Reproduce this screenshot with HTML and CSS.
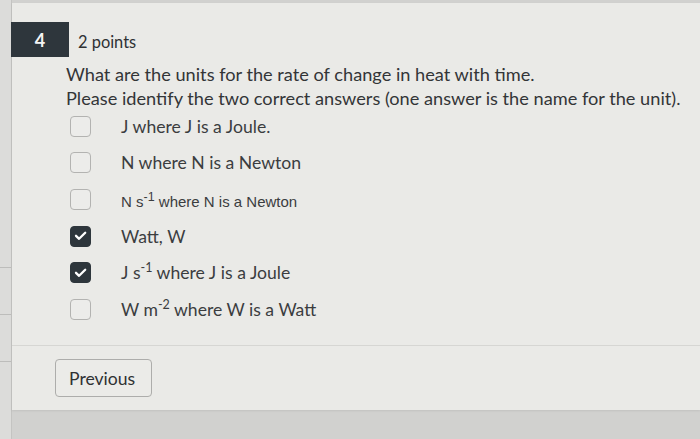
FILE: index.html
```html
<!DOCTYPE html>
<html>
<head>
<meta charset="utf-8">
<link rel="stylesheet" href="styles.css">
</head>
<body>
<div class="page">
  <aside class="side">
    <div class="side-gap"></div>
    <div class="side-row"></div>
    <div class="side-row"></div>
    <div class="side-row"></div>
  </aside>
  <main class="card">
    <section class="question">
      <header class="qhead">
        <div class="badge">4</div>
        <div class="points">2 points</div>
      </header>
      <div class="prompt">
        <p>What are the units for the rate of change in heat with time.</p>
        <p>Please identify the two correct answers (one answer is the name for the unit).</p>
      </div>
      <ul class="options">
        <li class="opt"><span class="box"></span><span class="label">J where J is a Joule.</span></li>
        <li class="opt"><span class="box"></span><span class="label">N where N is a Newton</span></li>
        <li class="opt"><span class="box"></span><span class="label small">N s<sup>-1</sup> where N is a Newton</span></li>
        <li class="opt"><span class="box checked"><svg viewBox="0 0 21 21" width="21" height="21"><path d="M6 10.8 L9.1 13.8 L15.2 7.7" fill="none" stroke="#fff" stroke-width="2.3" stroke-linecap="round" stroke-linejoin="round"/></svg></span><span class="label">Watt, W</span></li>
        <li class="opt"><span class="box checked"><svg viewBox="0 0 21 21" width="21" height="21"><path d="M6 10.8 L9.1 13.8 L15.2 7.7" fill="none" stroke="#fff" stroke-width="2.3" stroke-linecap="round" stroke-linejoin="round"/></svg></span><span class="label">J s<sup>-1</sup> where J is a Joule</span></li>
        <li class="opt"><span class="box"></span><span class="label">W m<sup>-2</sup> where W is a Watt</span></li>
      </ul>
    </section>
    <footer class="foot">
      <button class="btn">Previous</button>
    </footer>
  </main>
</div>
</body>
</html>
```

FILE: styles.css
```css
html, body {
  margin: 0;
  padding: 0;
}
body {
  width: 700px;
  height: 439px;
  overflow: hidden;
  background: #d1d1cf;
  font-family: Lato, "Open Sans", sans-serif;
  color: #3b3d3f;
}
.page {
  display: flex;
  height: 439px;
}
.side {
  width: 11px;
  flex: none;
  display: flex;
  flex-direction: column;
  background: #dcdcda;
  border-right: 1px solid #c4c4c2;
}
.side-gap {
  height: 267px;
}
.side-row {
  height: 46px;
  border-top: 1px solid #bdbdbb;
}
.card {
  flex: 1;
  margin-top: 3px;
  height: 407px;
  background: #eaeae7;
  display: flex;
  flex-direction: column;
  box-shadow: 0 1px 2px rgba(0,0,0,0.08);
}
.question {
  height: 342px;
  border-bottom: 1px solid #d6d6d3;
  padding-left: 54px;
}
.qhead {
  display: flex;
  align-items: center;
  margin-left: -55px;
  margin-top: 19px;
  height: 35px;
}
.badge {
  width: 58px;
  height: 35px;
  background: #2e363c;
  color: #f4f4f4;
  font-weight: 700;
  font-size: 18px;
  display: flex;
  align-items: center;
  justify-content: center;
}
.points {
  margin-left: 9px;
  font-size: 16.4px;
  color: #2f3133;
  padding-top: 4px;
}
.prompt {
  margin-top: 5px;
}
.prompt p {
  margin: 0;
  font-size: 18.2px;
  line-height: 24px;
  color: #333537;
}
.options {
  list-style: none;
  margin: -2px 0 0 4px;
  padding: 0;
}
.opt {
  display: flex;
  align-items: center;
  height: 36.6px;
}
.box {
  width: 21px;
  height: 21px;
  box-sizing: border-box;
  border: 1.5px solid #b3b3b1;
  border-radius: 4px;
  background: #ececea;
  flex: none;
  display: flex;
}
.box.checked {
  background: #2e363c;
  border-color: #2e363c;
}
.box svg {
  margin: -1.5px;
}
.label {
  margin-left: 30px;
  font-size: 17.6px;
  color: #3b3d3f;
}
.label sup {
  font-size: 12.5px;
  line-height: 0;
}
.label.small {
  font-family: "Liberation Sans", Arial, sans-serif;
  font-size: 15px;
  padding-top: 4px;
}
.label.small sup {
  font-size: 12.5px;
  vertical-align: 6px;
}
.foot {
  flex: 1;
  padding-left: 43px;
  padding-top: 13px;
}
.btn {
  width: 97px;
  height: 38px;
  border: 1px solid #adadab;
  border-radius: 4px;
  background: #ebebe8;
  font-family: Lato, sans-serif;
  font-size: 17.6px;
  color: #2f3133;
  text-align: left;
  padding-left: 13px;
}
```
